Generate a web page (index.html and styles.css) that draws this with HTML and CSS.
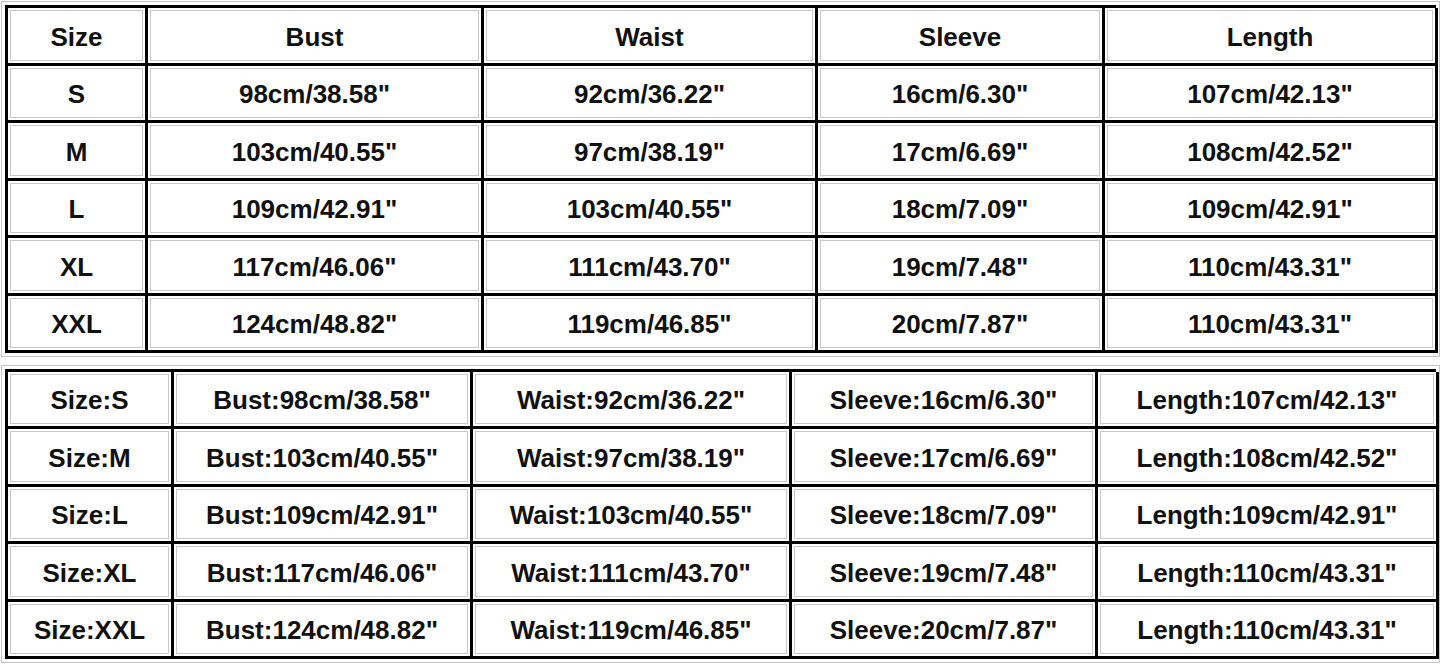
FILE: index.html
```html
<!DOCTYPE html>
<html>
<head>
<meta charset="utf-8">
<link rel="stylesheet" href="styles.css">
</head>
<body>
<div class="frame">
  <div class="chart chart-a">
    <div class="cell"><span>Size</span></div>
    <div class="cell"><span>Bust</span></div>
    <div class="cell"><span>Waist</span></div>
    <div class="cell"><span>Sleeve</span></div>
    <div class="cell"><span>Length</span></div>

    <div class="cell"><span>S</span></div>
    <div class="cell"><span>98cm/38.58"</span></div>
    <div class="cell"><span>92cm/36.22"</span></div>
    <div class="cell"><span>16cm/6.30"</span></div>
    <div class="cell"><span>107cm/42.13"</span></div>

    <div class="cell"><span>M</span></div>
    <div class="cell"><span>103cm/40.55"</span></div>
    <div class="cell"><span>97cm/38.19"</span></div>
    <div class="cell"><span>17cm/6.69"</span></div>
    <div class="cell"><span>108cm/42.52"</span></div>

    <div class="cell"><span>L</span></div>
    <div class="cell"><span>109cm/42.91"</span></div>
    <div class="cell"><span>103cm/40.55"</span></div>
    <div class="cell"><span>18cm/7.09"</span></div>
    <div class="cell"><span>109cm/42.91"</span></div>

    <div class="cell"><span>XL</span></div>
    <div class="cell"><span>117cm/46.06"</span></div>
    <div class="cell"><span>111cm/43.70"</span></div>
    <div class="cell"><span>19cm/7.48"</span></div>
    <div class="cell"><span>110cm/43.31"</span></div>

    <div class="cell"><span>XXL</span></div>
    <div class="cell"><span>124cm/48.82"</span></div>
    <div class="cell"><span>119cm/46.85"</span></div>
    <div class="cell"><span>20cm/7.87"</span></div>
    <div class="cell"><span>110cm/43.31"</span></div>
  </div>
</div>

<div class="frame frame-b">
  <div class="chart chart-b">
    <div class="cell"><span>Size:S</span></div>
    <div class="cell"><span>Bust:98cm/38.58"</span></div>
    <div class="cell"><span>Waist:92cm/36.22"</span></div>
    <div class="cell"><span>Sleeve:16cm/6.30"</span></div>
    <div class="cell"><span>Length:107cm/42.13"</span></div>

    <div class="cell"><span>Size:M</span></div>
    <div class="cell"><span>Bust:103cm/40.55"</span></div>
    <div class="cell"><span>Waist:97cm/38.19"</span></div>
    <div class="cell"><span>Sleeve:17cm/6.69"</span></div>
    <div class="cell"><span>Length:108cm/42.52"</span></div>

    <div class="cell"><span>Size:L</span></div>
    <div class="cell"><span>Bust:109cm/42.91"</span></div>
    <div class="cell"><span>Waist:103cm/40.55"</span></div>
    <div class="cell"><span>Sleeve:18cm/7.09"</span></div>
    <div class="cell"><span>Length:109cm/42.91"</span></div>

    <div class="cell"><span>Size:XL</span></div>
    <div class="cell"><span>Bust:117cm/46.06"</span></div>
    <div class="cell"><span>Waist:111cm/43.70"</span></div>
    <div class="cell"><span>Sleeve:19cm/7.48"</span></div>
    <div class="cell"><span>Length:110cm/43.31"</span></div>

    <div class="cell"><span>Size:XXL</span></div>
    <div class="cell"><span>Bust:124cm/48.82"</span></div>
    <div class="cell"><span>Waist:119cm/46.85"</span></div>
    <div class="cell"><span>Sleeve:20cm/7.87"</span></div>
    <div class="cell"><span>Length:110cm/43.31"</span></div>
  </div>
</div>
</body>
</html>
```

FILE: styles.css
```css
html, body {
  margin: 0;
  padding: 0;
  background: #ffffff;
}

body {
  padding: 1px 0 0 1px;
  font-family: "Liberation Sans", Arial, sans-serif;
  color: #111111;
}

.frame {
  width: 1439px;
  padding: 3px;
  border: 1px solid #c4c4c4;
  box-sizing: border-box;
}

.frame-b {
  margin-top: 8px;
}

.chart {
  display: grid;
  border-top: 3px solid #000;
  border-left: 3px solid #000;
}

.chart-a {
  grid-template-columns: 140px 336px 334px 287px 333px;
  grid-template-rows: 58px 57px 58px 57px 58px 57px;
}

.chart-b {
  grid-template-columns: 166px 299px 319px 306px 341px;
  grid-template-rows: 57px 58px 57px 58px 57px;
}

.cell {
  border-right: 3px solid #000;
  border-bottom: 3px solid #000;
  padding: 2px;
  display: flex;
  min-width: 0;
}

.cell span {
  flex: 1;
  border: 1px solid #c8c8c8;
  display: flex;
  align-items: center;
  justify-content: center;
  padding-top: 3px;
  font-size: 26px;
  font-weight: bold;
  white-space: nowrap;
}
```
